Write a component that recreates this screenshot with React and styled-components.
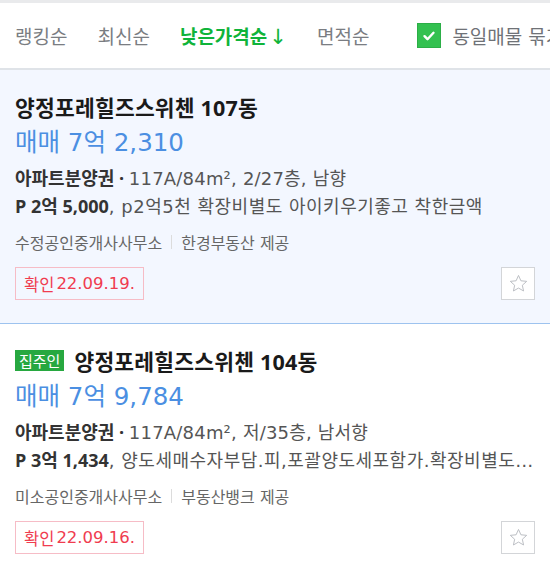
import React from "react";
import styled, { createGlobalStyle } from "styled-components";

const GlobalStyle = createGlobalStyle`
  body {
    margin: 0;
    background: #fff;
    font-family: "DejaVu Sans", "Noto Sans CJK KR", sans-serif;
  }
`;

// latin glyphs of the bold parts come out too wide in DejaVu, so bold uses Open Sans
const boldFont = `"Open Sans", "Noto Sans CJK KR", sans-serif`;

const sorts = [
  { label: "랭킹순" },
  { label: "최신순" },
  { label: "낮은가격순", active: true },
  { label: "면적순" },
];

const articles = [
  {
    title: "양정포레힐즈스위첸 107동",
    price: "매매 7억 2,310",
    spec: "117A/84m², 2/27층, 남향",
    premium: "2억 5,000",
    desc: "p2억5천 확장비별도 아이키우기좋고 착한금액",
    agent: "수정공인중개사사무소",
    provider: "한경부동산 제공",
    date: "22.09.19.",
    highlight: true,
  },
  {
    badge: "집주인",
    title: "양정포레힐즈스위첸 104동",
    price: "매매 7억 9,784",
    spec: "117A/84m², 저/35층, 남서향",
    premium: "3억 1,434",
    desc: "양도세매수자부담.피,포괄양도세포함가.확장비별도 아이키우기좋고",
    agent: "미소공인중개사사무소",
    provider: "부동산뱅크 제공",
    date: "22.09.16.",
  },
];

function Star() {
  return (
    <svg width="21" height="21" viewBox="0 0 24 24">
      <path
        d="M12 2.8l2.75 6.1 6.6.65-4.95 4.45 1.4 6.55L12 17.2l-5.8 3.35 1.4-6.55-4.95-4.45 6.6-.65z"
        fill="none"
        stroke="#b9bcc2"
        strokeWidth="1.1"
        strokeLinejoin="round"
      />
    </svg>
  );
}

function App() {
  return (
    <Page>
      <GlobalStyle />
      <Toolbar>
        {sorts.map((s, i) => (
          <React.Fragment key={s.label}>
            {i > 0 && <Divider />}
            <SortItem active={s.active}>
              {s.label}
              {s.active && <Arrow>↓</Arrow>}
            </SortItem>
          </React.Fragment>
        ))}
        <CheckLabel>
          <CheckBox>
            <svg width="14" height="14" viewBox="0 0 14 14">
              <path
                d="M2.5 7.2l3 3 6-6.4"
                fill="none"
                stroke="#fff"
                strokeWidth="2.4"
                strokeLinecap="round"
                strokeLinejoin="round"
              />
            </svg>
          </CheckBox>
          동일매물 묶기
        </CheckLabel>
      </Toolbar>

      {articles.map((a) => (
        <Card key={a.title} highlight={a.highlight}>
          <TitleRow>
            {a.badge && <Badge>{a.badge}</Badge>}
            <Title>{a.title}</Title>
          </TitleRow>
          <Price>{a.price}</Price>
          <Line>
            <strong>아파트분양권 · </strong>
            {a.spec}
          </Line>
          <Line clip>
            <strong>P {a.premium}</strong>, {a.desc}
          </Line>
          <Agents>
            <span>{a.agent}</span>
            <AgentDivider />
            <span>{a.provider}</span>
          </Agents>
          <Footer>
            <Tag>
              확인<TagDate>{a.date}</TagDate>
            </Tag>
            <StarButton>
              <Star />
            </StarButton>
          </Footer>
        </Card>
      ))}
    </Page>
  );
}

export default App;

const Page = styled.div`
  width: 550px;
  height: 561px;
  overflow: hidden;
`;

const Toolbar = styled.div`
  display: flex;
  align-items: center;
  height: 65px;
  padding-left: 15px;
  border-top: 3px solid #e9eaec;
  border-bottom: 2px solid #dfe3e8;
  background: #fff;
  white-space: nowrap;
  overflow: hidden;
`;

const SortItem = styled.span`
  font-size: 19px;
  color: ${(p) => (p.active ? "#0fb43a" : "#7a7d82")};
  font-weight: ${(p) => (p.active ? 700 : 400)};
  font-family: ${(p) => (p.active ? boldFont : "inherit")};
`;

const Arrow = styled.span`
  font-family: "DejaVu Sans", sans-serif;
  font-weight: 400;
  font-size: 21px;
  margin-left: 2px;
`;

const Divider = styled.span`
  width: 1px;
  height: 15px;
  background: #e3e4e6;
  margin: 0 15px;
`;

const CheckLabel = styled.span`
  display: flex;
  align-items: center;
  gap: 11px;
  margin-left: 48px;
  font-size: 19px;
  color: #6f7277;
`;

const CheckBox = styled.span`
  display: flex;
  align-items: center;
  justify-content: center;
  width: 24px;
  height: 25px;
  background: #33c150;
  border: 1px solid #2cae47;
  box-sizing: border-box;
`;

const Card = styled.div`
  padding: 22px 15px 23px;
  background: ${(p) => (p.highlight ? "#f3f7ff" : "#fff")};
  border-bottom: 1px solid ${(p) => (p.highlight ? "#9dc3ef" : "#e6e8eb")};
  color: #444;
`;

const TitleRow = styled.div`
  display: flex;
  align-items: center;
  gap: 10px;
  height: 28px;
`;

const Badge = styled.span`
  display: flex;
  align-items: center;
  height: 21px;
  padding: 0 4px;
  background: #27a840;
  color: #fff;
  font-size: 15px;
`;

const Title = styled.div`
  font-size: 21.5px;
  font-weight: 700;
  font-family: ${boldFont};
  color: #1a1a1a;
  letter-spacing: 0.2px;
`;

const Price = styled.div`
  margin-top: 6px;
  height: 34px;
  line-height: 34px;
  font-size: 24.5px;
  color: #4b8fe2;
`;

const Line = styled.div`
  margin-top: ${(p) => (p.clip ? "2px" : "5px")};
  height: 26px;
  line-height: 26px;
  font-size: 18px;
  letter-spacing: ${(p) => (p.clip ? "0.5px" : "0.2px")};
  color: #555;
  white-space: nowrap;
  overflow: hidden;
  text-overflow: ellipsis;

  strong {
    color: #333;
    font-weight: 700;
    font-family: ${boldFont};
    letter-spacing: 0;
  }
`;

const Agents = styled.div`
  display: flex;
  align-items: center;
  margin-top: 12px;
  height: 22px;
  font-size: 16px;
  color: #666;
`;

const AgentDivider = styled.span`
  width: 1px;
  height: 14px;
  background: #dcdcdc;
  margin: 0 9px;
`;

const Footer = styled.div`
  display: flex;
  align-items: center;
  justify-content: space-between;
  margin-top: 14px;
`;

const Tag = styled.span`
  display: flex;
  align-items: center;
  height: 33px;
  padding: 0 8px;
  border: 1px solid #f6bcc6;
  box-sizing: border-box;
  color: #f03c4f;
  font-size: 16.5px;
`;

const TagDate = styled.span`
  margin-left: 2px;
`;

const StarButton = styled.span`
  display: flex;
  align-items: center;
  justify-content: center;
  width: 34px;
  height: 33px;
  border: 1px solid #d3d5d8;
  box-sizing: border-box;
  background: #fff;
`;
